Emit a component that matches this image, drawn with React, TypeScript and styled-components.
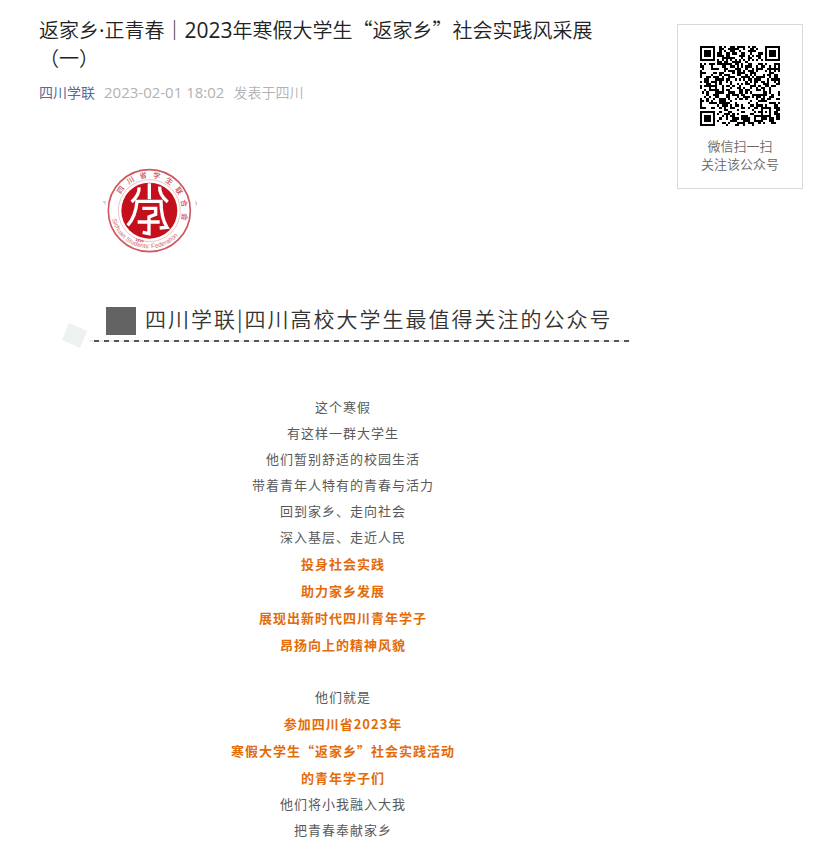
import React from 'react';
import styled, { createGlobalStyle } from 'styled-components';

const GlobalStyle = createGlobalStyle`
  * { box-sizing: border-box; }
  body {
    margin: 0;
    background: #fff;
    color: #222;
    font-family: "Noto Sans CJK SC", sans-serif;
  }
`;

const Page = styled.div`
  display: flex;
  align-items: flex-start;
  justify-content: space-between;
  gap: 30px;
  padding: 16px 17px 12px 39px;
`;

const Article = styled.main`
  flex: 1;
  min-width: 0;
`;

const Title = styled.h1`
  margin: 0;
  font-size: 20px;
  line-height: 28px;
  font-weight: 350;
`;

const Latin = styled.span`
  font-family: "Open Sans", sans-serif;
  font-size: 21px;
  line-height: 20px;
  font-weight: 400;
`;

const Meta = styled.div`
  display: flex;
  align-items: center;
  gap: 9px;
  margin-top: 9px;
  height: 22px;
  font-size: 14px;
  line-height: 22px;
  color: #b2b2b2;
  font-weight: 350;
`;

const Account = styled.a`
  color: #576b95;
  text-decoration: none;
  font-weight: 400;
`;

const Time = styled.time`
  font-family: "Open Sans", sans-serif;
  font-size: 15px;
  font-weight: 400;
`;

const Seal = styled.svg`
  display: block;
  width: 110px;
  height: 100px;
  margin: 57px 0 0 56px;
`;

const Banner = styled.div`
  display: flex;
  align-items: flex-end;
  margin: 41px 17px 0 22px;
`;

const Tile = styled.svg`
  flex: none;
  width: 28px;
  height: 28px;
  margin-bottom: -4px;
`;

const BannerMain = styled.div`
  flex: 1;
  min-width: 0;
  padding-bottom: 4px;
`;

const BannerRow = styled.div`
  display: flex;
  align-items: flex-end;
  gap: 9px;
  height: 34px;
  padding-left: 17px;
`;

const Block = styled.span`
  flex: none;
  width: 30px;
  height: 28px;
  background: #636363;
`;

const BannerText = styled.h2`
  margin: 0;
  font-size: 21px;
  line-height: 34px;
  font-weight: 350;
  letter-spacing: 2px;
  white-space: nowrap;
  color: #333;
`;

const Dashes = styled.div`
  height: 2px;
  margin-top: 5px;
  background: repeating-linear-gradient(90deg, #eee 0 5px, #555 5px 10px);
`;

const Poem = styled.section`
  margin-top: 48px;
  text-align: center;
  font-size: 13px;
  letter-spacing: 1px;
`;

const Line = styled.p<{ $strong?: boolean }>`
  margin: 0;
  min-height: 26px;
  line-height: ${p => (p.$strong ? 27 : 26)}px;
  font-weight: ${p => (p.$strong ? 700 : 400)};
  color: ${p => (p.$strong ? '#e36c09' : '#595959')};
`;

const Card = styled.aside`
  flex: none;
  display: flex;
  flex-direction: column;
  align-items: center;
  width: 126px;
  margin-top: 8px;
  padding: 21px 16px 15px;
  border: 1px solid #d9d9d9;
`;

const Code = styled.svg`
  width: 80px;
  height: 80px;
`;

const Caption = styled.p`
  margin: 11px 0 0;
  font-size: 13px;
  line-height: 18px;
  font-weight: 350;
  text-align: center;
  white-space: nowrap;
  color: #666;
`;

const SIZE = 37;

function ring(x: number, y: number, cx: number, cy: number) {
  return Math.max(Math.abs(x - cx), Math.abs(y - cy));
}

function buildModules() {
  let seed = 20230201;
  let d = '';
  for (let y = 0; y < SIZE; y++) {
    for (let x = 0; x < SIZE; x++) {
      seed = (Math.imul(seed, 1664525) + 1013904223) >>> 0;
      let on = ((seed >>> 16) & 255) < 132;
      if (x === 6 || y === 6) on = (x + y) % 2 === 0;
      const align = ring(x, y, 30, 30);
      if (align <= 2) on = align !== 1;
      for (const [cx, cy] of [[3, 3], [33, 3], [3, 33]]) {
        const r = ring(x, y, cx, cy);
        if (r <= 4) on = r === 3 || r <= 1;
      }
      if (on) d += `M${x} ${y}h1v1h-1z`;
    }
  }
  return d;
}

const modules = buildModules();

const lines: { text: string; strong?: boolean }[] = [
  { text: '这个寒假' },
  { text: '有这样一群大学生' },
  { text: '他们暂别舒适的校园生活' },
  { text: '带着青年人特有的青春与活力' },
  { text: '回到家乡、走向社会' },
  { text: '深入基层、走近人民' },
  { text: '投身社会实践', strong: true },
  { text: '助力家乡发展', strong: true },
  { text: '展现出新时代四川青年学子', strong: true },
  { text: '昂扬向上的精神风貌', strong: true },
  { text: '' },
  { text: '他们就是' },
  { text: '参加四川省2023年', strong: true },
  { text: '寒假大学生“返家乡”社会实践活动', strong: true },
  { text: '的青年学子们', strong: true },
  { text: '他们将小我融入大我' },
  { text: '把青春奉献家乡' },
];

const sealChars = ['四', '川', '省', '学', '生', '联', '合', '会'];

function SealLogo() {
  return (
    <Seal viewBox="0 0 330 300" role="img" aria-label="四川省学生联合会">
      <defs>
        <path id="lower" d="M51 176A115 115 0 0 0 275 176" />
      </defs>
      <circle cx="163" cy="152" r="123" fill="#fff" stroke="#cf5860" strokeWidth="5" />
      <circle cx="163" cy="152" r="93" fill="none" stroke="#e6a5aa" strokeWidth="2" />
      <circle cx="163" cy="152" r="84" fill="#c4101c" />
      <g fill="none" stroke="#fff" strokeWidth="10" strokeLinejoin="miter">
        <path d="M163 70v48M132 82q2 22-22 44M194 80q-2 24 24 46" />
        <path d="M98 196q24-26 28-72h72q0 50 18 78l-22 2" />
        <path d="M142 145h40v18l-20 8v50l-19-4M128 186h66" />
      </g>
      <g fill="#c8515a" fontSize="22" fontWeight="500" textAnchor="middle">
        {sealChars.map((c, i) => (
          <text key={c} x="163" y="53" transform={`rotate(${-54 + i * 22} 163 152)`}>{c}</text>
        ))}
      </g>
      <text fill="#cf6870" fontSize="19" fontFamily="Liberation Sans, sans-serif">
        <textPath href="#lower" startOffset="2">Sichuan Students' Federation</textPath>
      </text>
      <text x="133" y="245" fill="#c4303a" fontSize="11" textAnchor="middle" fontWeight="700" fontFamily="Liberation Sans, sans-serif" transform="rotate(12 133 245)">1919</text>
      <path d="M24 126l6-2v9M300 126l5 2-2 8" fill="none" stroke="#e6a5aa" strokeWidth="3" />
    </Seal>
  );
}

export default function App() {
  return (
    <>
      <GlobalStyle />
      <Page>
        <Article>
          <Title>
            返家乡<Latin>·</Latin>正青春｜<Latin>2023</Latin>年寒假大学生“返家乡”社会实践风采展
            <br />
            （一）
          </Title>
          <Meta>
            <Account href="#">四川学联</Account>
            <Time dateTime="2023-02-01T18:02">2023-02-01 18:02</Time>
            <span>发表于四川</span>
          </Meta>
          <SealLogo />
          <Banner>
            <Tile viewBox="0 0 28 28" aria-hidden="true">
              <path d="M8 1l18 8-7 17L1 18z" fill="#edf1f0" />
            </Tile>
            <BannerMain>
              <BannerRow>
                <Block />
                <BannerText>四川学联|四川高校大学生最值得关注的公众号</BannerText>
              </BannerRow>
              <Dashes />
            </BannerMain>
          </Banner>
          <Poem>
            {lines.map((line, i) => (
              <Line key={i} $strong={line.strong}>{line.text}</Line>
            ))}
          </Poem>
        </Article>
        <Card>
          <Code viewBox="0 0 37 37" shapeRendering="crispEdges" role="img" aria-label="公众号二维码">
            <path d={modules} fill="#000" />
          </Code>
          <Caption>
            微信扫一扫
            <br />
            关注该公众号
          </Caption>
        </Card>
      </Page>
    </>
  );
}
